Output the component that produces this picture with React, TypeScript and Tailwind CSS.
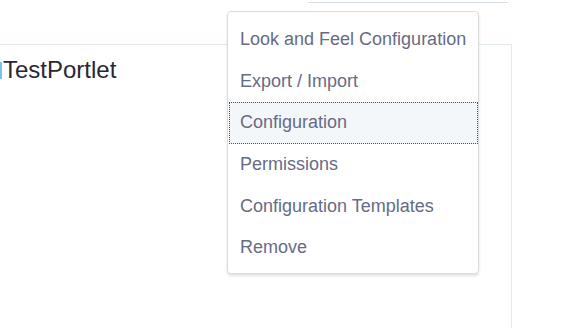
import React from "react";

const items = [
  "Look and Feel Configuration",
  "Export / Import",
  "Configuration",
  "Permissions",
  "Configuration Templates",
  "Remove",
];

export default function App() {
  return (
    <div
      className="relative w-[561px] h-[328px] overflow-hidden bg-white"
      style={{ fontFamily: '"Liberation Sans", Arial, sans-serif' }}
    >
      <div className="ml-[308px] mt-[2px] w-[200px] h-px bg-[#d8dfe4]" />
      <div className="mt-[41px] w-[512px] h-[300px] border-t border-r border-[#e3eaed]">
        <div className="pt-[11px] flex items-center leading-[28px] text-[24px] text-[#272833]">
          <span className="inline-block w-[2px] h-[17px] bg-[#7cc0ec] mr-[1px]" />
          <span>TestPortlet</span>
        </div>
      </div>

      <div className="absolute left-[227px] top-[11px] w-[252px] rounded-[4px] border border-[#dcdcdc] bg-white pt-[7px] pb-[4px] shadow-[0_2px_3px_rgba(0,0,0,0.12)]">
        {items.map((t, i) =>
          i === 2 ? (
            <div
              key={t}
              className="ml-px flex h-[41.6px] items-center border border-dotted border-[#4b4e6a] bg-[#f4f7f9] pl-[10px] text-[18px] text-[#676b85]"
            >
              {t}
            </div>
          ) : (
            <div
              key={t}
              className="flex h-[41.6px] items-center pl-[12px] text-[18px] text-[#676b85]"
            >
              {t}
            </div>
          )
        )}
      </div>
    </div>
  );
}
